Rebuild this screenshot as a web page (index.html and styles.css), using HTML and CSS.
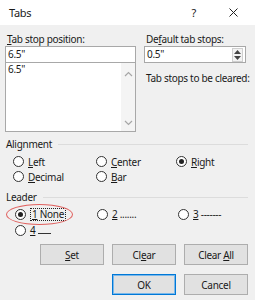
FILE: index.html
```html
<!DOCTYPE html>
<html lang="en">
<head>
    <meta charset="UTF-8">
    <meta name="viewport" content="width=device-width, initial-scale=1.0">
    <title>Tabs</title>
    <link rel="stylesheet" href="styles.css">
</head>
<body>
    <div class="dialog">
        <div class="titlebar">
            <span class="title">Tabs</span>
            <span class="help">?</span>
            <svg class="close" width="9" height="9" viewBox="0 0 9 9">
                <path d="M0.5 0.5 L8.5 8.5 M8.5 0.5 L0.5 8.5" stroke="#222" stroke-width="1"/>
            </svg>
        </div>

        <div class="content">
            <div class="top">
                <div class="col">
                    <div class="label"><u>T</u>ab stop position:</div>
                    <div class="textbox">6.5"</div>
                    <div class="listbox">
                        <div class="list-items">
                            <div class="list-item">6.5"</div>
                        </div>
                        <div class="scrollbar">
                            <svg width="9" height="6" viewBox="0 0 9 6"><path d="M1 5 L4.5 1.5 L8 5" fill="none" stroke="#a6a6a6" stroke-width="1.2"/></svg>
                            <svg width="9" height="6" viewBox="0 0 9 6"><path d="M1 1 L4.5 4.5 L8 1" fill="none" stroke="#a6a6a6" stroke-width="1.2"/></svg>
                        </div>
                    </div>
                </div>
                <div class="col">
                    <div class="label">De<u>f</u>ault tab stops:</div>
                    <div class="textbox spinner">
                        <span>0.5"</span>
                        <div class="spin">
                            <svg width="7" height="4" viewBox="0 0 7 4"><path d="M0 4 L3.5 0 L7 4 Z" fill="#444"/></svg>
                            <svg width="7" height="4" viewBox="0 0 7 4"><path d="M0 0 L3.5 4 L7 0 Z" fill="#444"/></svg>
                        </div>
                    </div>
                    <div class="label cleared">Tab stops to be cleared:</div>
                </div>
            </div>

            <div class="group-title">Alignment</div>
            <div class="options">
                <label class="option"><span class="radio"></span><span><u>L</u>eft</span></label>
                <label class="option"><span class="radio"></span><span><u>C</u>enter</span></label>
                <label class="option"><span class="radio checked"></span><span><u>R</u>ight</span></label>
                <label class="option"><span class="radio"></span><span><u>D</u>ecimal</span></label>
                <label class="option"><span class="radio"></span><span><u>B</u>ar</span></label>
            </div>

            <div class="group-title leader-title">Leader</div>
            <div class="options leader">
                <label class="option circled"><span class="radio checked"></span><span class="focus"><u>1</u> None</span></label>
                <label class="option"><span class="radio"></span><span><u>2</u> .......</span></label>
                <label class="option"><span class="radio"></span><span><u>3</u> -------</span></label>
                <label class="option"><span class="radio"></span><span><u>4</u> <span class="line-fill"></span></span></label>
            </div>

            <div class="buttons">
                <button class="btn"><u>S</u>et</button>
                <button class="btn">Cl<u>e</u>ar</button>
                <button class="btn">Clear <u>A</u>ll</button>
            </div>
            <div class="buttons bottom">
                <button class="btn default">OK</button>
                <button class="btn">Cancel</button>
            </div>
        </div>
    </div>
</body>
</html>
```

FILE: styles.css
```css
body {
    margin: 0;
    padding: 0;
    background-color: #f0f0f0;
    font-family: 'Noto Sans', 'Open Sans', sans-serif;
    font-size: 10px;
    letter-spacing: -0.3px;
    color: #1a1a1a;
}
u {
    text-decoration-thickness: 1px;
    text-underline-offset: 1px;
}
.dialog {
    width: 255px;
    height: 300px;
    overflow: hidden;
}
.titlebar {
    height: 25px;
    background-color: white;
    display: flex;
    align-items: center;
}
.title {
    font-size: 11px;
    margin-left: 9px;
    flex: 1;
}
.help {
    font-size: 11px;
    margin-right: 33px;
}
.close {
    margin-right: 17px;
}
.content {
    padding: 7px 7px 0 5px;
}
.top {
    display: grid;
    grid-template-columns: 131px 102px;
    column-gap: 8px;
}
.label {
    height: 14px;
    line-height: 14px;
    padding-left: 2px;
    white-space: nowrap;
}
.textbox {
    height: 15px;
    line-height: 15px;
    border: 1px solid #a8a8a8;
    background-color: white;
    padding-left: 2px;
}
.spinner {
    display: flex;
    justify-content: space-between;
    align-items: center;
}
.spin {
    width: 9px;
    height: 12px;
    margin-right: 2px;
    border: 1px solid #cfcfcf;
    background-color: #f3f3f3;
    display: flex;
    flex-direction: column;
    align-items: center;
    justify-content: space-around;
}
.spin svg {
    display: block;
}
.cleared {
    margin-top: 8px;
}
.listbox {
    height: 68px;
    border: 1px solid #a8a8a8;
    border-top: none;
    background-color: white;
    display: flex;
}
.list-items {
    flex: 1;
    padding-left: 2px;
}
.list-item {
    line-height: 13px;
}
.scrollbar {
    width: 14px;
    background-color: #f4f4f4;
    display: flex;
    flex-direction: column;
    justify-content: space-between;
    align-items: center;
    padding: 8px 0 5px;
}
.scrollbar svg {
    display: block;
}
.group-title {
    margin-top: 5px;
    height: 14px;
    line-height: 14px;
    padding-left: 1px;
    display: flex;
    align-items: center;
    gap: 6px;
}
.group-title::after {
    content: "";
    flex: 1;
    height: 1px;
    background-color: #dcdcdc;
}
.leader-title {
    margin-top: 6px;
}
.options {
    margin-top: 3px;
    padding-left: 8px;
    display: grid;
    grid-template-columns: 83px 80px 1fr;
    grid-auto-rows: 15px;
}
.leader {
    margin-top: 2px;
    padding-left: 10px;
    grid-template-columns: 82px 81px 1fr;
    grid-auto-rows: 16px;
}
.option {
    display: flex;
    align-items: center;
    gap: 4px;
    position: relative;
}
.radio {
    width: 9px;
    height: 9px;
    border: 1px solid #333;
    border-radius: 50%;
    background-color: white;
    display: flex;
    align-items: center;
    justify-content: center;
    flex-shrink: 0;
}
.radio.checked::after {
    content: "";
    width: 5px;
    height: 5px;
    border-radius: 50%;
    background-color: #222;
}
.focus {
    border: 1px dotted #222;
    line-height: 11px;
    padding: 0 1px;
}
.line-fill {
    display: inline-block;
    width: 13px;
    height: 6px;
    border-bottom: 1px solid #333;
}
.circled::before {
    content: "";
    position: absolute;
    left: -9px;
    top: -2px;
    width: 65px;
    height: 19px;
    border: 1px solid #e0605e;
    border-radius: 50%;
}
.buttons {
    margin-top: 6px;
    display: flex;
    justify-content: flex-end;
    gap: 8px;
}
.buttons.bottom {
    margin-top: 9px;
}
.btn {
    width: 64px;
    height: 21px;
    background-color: #e1e1e1;
    border: 1px solid #adadad;
    font-family: 'Noto Sans', 'Open Sans', sans-serif;
    font-size: 10px;
    letter-spacing: -0.3px;
    color: #1a1a1a;
    padding: 0;
}
.btn.default {
    border-color: #0078d7;
    box-shadow: inset 0 0 0 1px #7ab8ea;
}
```
